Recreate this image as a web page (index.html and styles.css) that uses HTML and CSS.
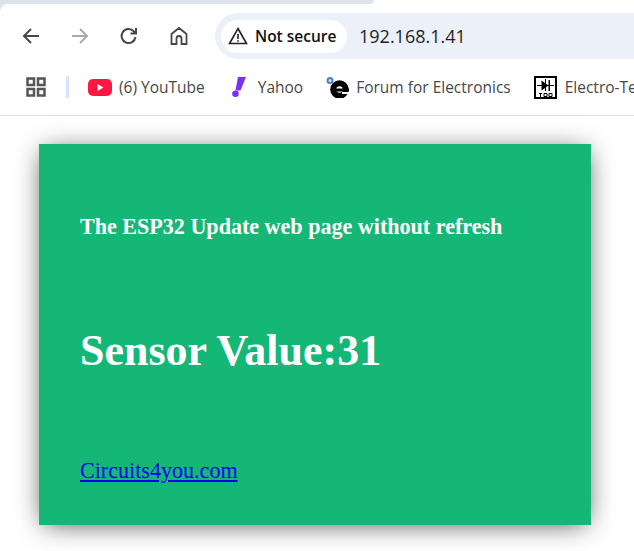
FILE: index.html
```html
<!DOCTYPE html>
<html lang="en">
  <head>
    <meta charset="UTF-8" />
    <meta name="viewport" content="width=device-width, initial-scale=1.0" />
    <title>ESP32 Sensor</title>
    <link rel="stylesheet" href="styles.css">
  </head>
  <body>
    <!-- browser chrome -->
    <div class="tab-strip"><div class="tab-edge"></div></div>
    <div class="toolbar">
      <svg class="nav-icon back" viewBox="0 0 20 20"><path d="M18 10H3.500M10 3 3 10l7 7" /></svg>
      <svg class="nav-icon forward" viewBox="0 0 20 20"><path d="M2 10h14.500M10 3l7 7-7 7" /></svg>
      <svg class="nav-icon reload" viewBox="0 0 20 20"><path d="M16.500 11a7 7 0 1 1-1.800-5.700L17 7.500M17 2v5.500h-5.500" /></svg>
      <svg class="nav-icon home" viewBox="0 0 20 20"><path d="M2.500 18V8L10 2l7.500 6v10h-5v-5.500a2.500 2.500 0 0 0-5 0V18z" /></svg>
      <div class="omnibox">
        <div class="security-chip">
          <svg class="warn-icon" viewBox="0 0 20 20"><path class="warn-outline" d="M10 2.500 18.500 17.500H1.500z" /><path class="warn-mark" d="M10 8v5M10 14.200v1.600" /></svg>
          <span>Not secure</span>
        </div>
        <span class="url">192.168.1.41</span>
      </div>
    </div>
    <div class="bookmarks">
      <svg class="apps-icon" viewBox="0 0 20 20"><path d="M1.500 1.500h6.500v6.500H1.500zM12 1.500h6.500v6.500H12zM1.500 12h6.500v6.500H1.500zM12 12h6.500v6.500H12z" /></svg>
      <div class="divider"></div>
      <div class="bookmark youtube">
        <svg class="favicon yt-icon" viewBox="0 0 24 17"><rect width="24" height="17" rx="5" fill="#ff1744" /><path d="M9.500 5v7l6-3.500z" fill="#fff" /></svg>
        <span>(6) YouTube</span>
      </div>
      <div class="bookmark yahoo">
        <svg class="favicon yahoo-icon" viewBox="0 0 14 20"><path d="M6 0h8L8.500 13.500h-5z" fill="#7b2ff2" /><circle cx="3.500" cy="16.700" r="3.300" fill="#7b2ff2" /></svg>
        <span>Yahoo</span>
      </div>
      <div class="bookmark forum">
        <svg class="favicon forum-icon" viewBox="0 0 23 21"><circle cx="13.500" cy="12.500" r="6.300" fill="none" stroke="#000" stroke-width="6" /><path d="M5 11.500h18v3H5z" fill="#000" /><path d="M16 15h7v2h-7z" fill="#fff" /><circle cx="4" cy="3.500" r="2.500" fill="#dbe6f7" stroke="#4a7fd0" stroke-width="2" /></svg>
        <span>Forum for Electronics</span>
      </div>
      <div class="bookmark eto">
        <svg class="favicon" viewBox="0 0 23 23"><rect x="1" y="1" width="21" height="21" fill="#fff" stroke="#000" stroke-width="2" /><path d="M3 9.500h17M11.500 3v12" stroke="#000" /><path d="M7.500 4.500v10l7-5zM14.500 4h1.500v11h-1.500z" fill="#000" /><path d="M5 17.500h3M6.500 17.500V21M10 17.500h3v3h-3zM15 17.500h3v3h-3z" fill="none" stroke="#000" /></svg>
        <span>Electro-Tech-Online</span>
      </div>
    </div>

    <!-- the page itself -->
    <div class="card">
      <h3>The ESP32 Update web page without refresh</h3>
      <h1>Sensor Value:<span id="sensorValue">31</span></h1>
      <a href="#">Circuits4you.com</a>
    </div>
  </body>
</html>
```

FILE: styles.css
```css
* {
  margin: 0;
  padding: 0;
  box-sizing: border-box;
}

html,
body {
  height: 551px;
  overflow: hidden;
  background: #fff;
}

.tab-strip {
  height: 4px;
  background: #fff;
}

.tab-edge {
  width: 374px;
  height: 4px;
  background: #dee3ea;
  border-bottom-right-radius: 6px;
}

.toolbar {
  display: flex;
  align-items: center;
  height: 64px;
  padding-left: 21px;
  background: radial-gradient(circle at 8px 8px, #fff 7.500px, #dee3ea 8.500px) 0 0 / 8px 8px no-repeat, #fff;
}

.nav-icon {
  width: 20px;
  height: 20px;
  fill: none;
  stroke: #474747;
  stroke-width: 2;
}

.forward {
  margin-left: 29px;
  stroke: #a9a9a9;
}

.reload {
  margin-left: 29px;
}

.home {
  margin-left: 30px;
  stroke-width: 1.800;
}

.omnibox {
  display: flex;
  align-items: center;
  width: 419px;
  height: 46px;
  margin-left: 26px;
  padding-left: 6px;
  background: #ebf0f9;
  border-radius: 23px 0 0 23px;
}

.security-chip {
  display: flex;
  align-items: center;
  width: 126px;
  height: 33px;
  padding-left: 7px;
  background: #fff;
  border-radius: 17px;
  font: 600 15.500px "Open Sans", sans-serif;
  color: #111;
}

.warn-icon {
  width: 20px;
  height: 20px;
  margin-right: 7px;
}

.warn-outline {
  fill: none;
  stroke: #222;
  stroke-width: 1.600;
}

.warn-mark {
  stroke: #222;
  stroke-width: 1.600;
}

.url {
  margin-left: 12px;
  font: 18px "Open Sans", sans-serif;
  color: #1f1f1f;
}

.bookmarks {
  display: flex;
  align-items: center;
  height: 48px;
  padding: 0 0 9px 26px;
  border-bottom: 1px solid #e2e2e2;
  font: 15.500px "Open Sans", sans-serif;
  color: #474747;
  white-space: nowrap;
  overflow: hidden;
}

.apps-icon {
  flex: none;
  width: 20px;
  height: 20px;
  fill: none;
  stroke: #555;
  stroke-width: 2.500;
}

.divider {
  flex: none;
  width: 3px;
  height: 22px;
  margin-left: 20px;
  background: #d3e3fd;
}

.bookmark {
  display: flex;
  flex: none;
  align-items: center;
}

.favicon {
  flex: none;
}

.youtube {
  margin-left: 19px;
}

.yt-icon {
  width: 24px;
  height: 17px;
  margin-right: 7px;
}

.yahoo {
  margin-left: 27px;
}

.yahoo-icon {
  width: 14px;
  height: 20px;
  margin-right: 12px;
}

.forum {
  margin-left: 23px;
}

.forum-icon {
  width: 23px;
  height: 21px;
  margin-right: 7px;
}

.eto {
  margin-left: 23px;
}

.eto svg {
  width: 23px;
  height: 23px;
  margin-right: 8px;
}

.card {
  width: 552px;
  height: 381px;
  margin: 28px 0 0 39px;
  padding: 70px 41px 0;
  background: #14b776;
  box-shadow: 0 3px 25px -5px rgba(0, 0, 0, 0.75);
  font-family: "Liberation Serif", "Times New Roman", serif;
  color: #fff;
}

.card h3 {
  font-size: 22.080px;
  line-height: 26px;
}

.card h1 {
  margin-top: 86px;
  font-size: 44px;
  line-height: 50px;
}

.card a {
  display: inline-block;
  margin-top: 82px;
  font-size: 22.080px;
  color: #0000ee;
}
```
